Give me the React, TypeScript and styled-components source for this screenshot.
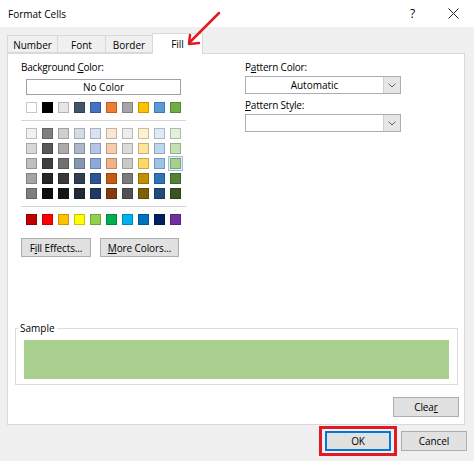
import styled, { createGlobalStyle } from 'styled-components';

const GlobalStyle = createGlobalStyle`
  html, body {
    margin: 0;
    padding: 0;
    background: #f0f0f0;
  }
  body {
    font-family: 'Open Sans', 'Noto Sans', sans-serif;
    font-size: 10px;
    color: #000;
  }
`;

const THEME_ROWS: string[][] = [
  ['#ffffff', '#000000', '#e7e6e6', '#44546a', '#4472c4', '#ed7d31', '#a5a5a5', '#ffc000', '#5b9bd5', '#70ad47'],
];

const SHADE_ROWS: string[][] = [
  ['#f2f2f2', '#7f7f7f', '#d0cece', '#d6dce4', '#d9e2f3', '#fbe5d5', '#ededed', '#fff2cc', '#deebf6', '#e2efd9'],
  ['#d8d8d8', '#595959', '#aeaaaa', '#adb9ca', '#b4c6e7', '#f7cbac', '#dbdbdb', '#fee599', '#bdd7ee', '#c5e0b3'],
  ['#bfbfbf', '#3f3f3f', '#757070', '#8496b0', '#8eaadb', '#f4b183', '#c9c9c9', '#ffd965', '#9dc3e6', '#a8d08d'],
  ['#a5a5a5', '#262626', '#3a3838', '#323f4f', '#2f5496', '#c55a11', '#7b7b7b', '#bf9000', '#2e75b5', '#538135'],
  ['#7f7f7f', '#0c0c0c', '#171616', '#222a35', '#1f3864', '#833c0b', '#525252', '#7f6000', '#1e4e79', '#375623'],
];

const STANDARD_ROWS: string[][] = [
  ['#c00000', '#ff0000', '#ffc000', '#ffff00', '#92d050', '#00b050', '#00b0f0', '#0070c0', '#002060', '#7030a0'],
];

const SELECTED = '#a8d08d';

const TABS = [
  { name: 'Number', width: 51 },
  { name: 'Font', width: 49 },
  { name: 'Border', width: 48 },
  { name: 'Fill', width: 51 },
];

const Dialog = styled.div`
  position: relative;
  width: 474px;
  height: 461px;
  display: flex;
  flex-direction: column;
  background: #f0f0f0;
  overflow: hidden;
`;

const TitleBar = styled.div`
  height: 27px;
  flex-shrink: 0;
  display: flex;
  align-items: center;
  padding-left: 8px;
  background: #ffffff;
`;

const Title = styled.div`
  flex-grow: 1;
  font-size: 10px;
`;

const TitleButton = styled.div`
  width: 41px;
  height: 27px;
  display: flex;
  align-items: center;
  justify-content: center;
  font-size: 12px;
`;

const Body = styled.div`
  display: flex;
  flex-direction: column;
  padding: 6px 9px 0 7px;
`;

const TabStrip = styled.div`
  height: 20px;
  display: flex;
  align-items: flex-end;
  padding-left: 1px;
`;

const Tab = styled.div<{ $active: boolean; $width: number }>`
  width: ${(p) => p.$width}px;
  height: ${(p) => (p.$active ? 21 : 18)}px;
  box-sizing: border-box;
  display: flex;
  align-items: center;
  justify-content: center;
  padding-top: ${(p) => (p.$active ? 0 : 1)}px;
  background: ${(p) => (p.$active ? '#ffffff' : '#f0f0f0')};
  border: 1px solid #d9d9d9;
  border-bottom: ${(p) => (p.$active ? 'none' : '1px solid #d9d9d9')};
  margin-left: -1px;
  margin-bottom: ${(p) => (p.$active ? -1 : 0)}px;
  position: relative;
  z-index: ${(p) => (p.$active ? 1 : 0)};
  font-size: 10px;
`;

const Panel = styled.div`
  height: 372px;
  box-sizing: border-box;
  display: flex;
  flex-direction: column;
  background: #ffffff;
  border: 1px solid #d9d9d9;
  padding: 6px 5px 7px 7px;
`;

const TopSection = styled.div`
  display: flex;
`;

const LeftColumn = styled.div`
  width: 165px;
  margin-left: 6px;
  margin-right: 59px;
  display: flex;
  flex-direction: column;
`;

const RightColumn = styled.div`
  width: 156px;
  display: flex;
  flex-direction: column;
`;

const Label = styled.div<{ $gap?: number }>`
  height: 14px;
  line-height: 14px;
  margin-top: ${(p) => p.$gap ?? 0}px;
  letter-spacing: -0.2px;
  white-space: nowrap;
`;

const NoColorBox = styled.div`
  width: 155px;
  height: 16px;
  box-sizing: border-box;
  margin: 5px 0 0 5px;
  border: 1px solid #a0a0a0;
  display: flex;
  align-items: center;
  justify-content: center;
  font-size: 10px;
`;

const SwatchGrid = styled.div`
  display: grid;
  grid-template-columns: repeat(10, 11px);
  column-gap: 5px;
  row-gap: 4px;
  margin: 7px 0 0 5px;
`;

const Swatch = styled.div<{ $selected?: boolean }>`
  width: 11px;
  height: 11px;
  box-sizing: border-box;
  border: 1px solid rgba(0, 0, 0, 0.22);
  outline: ${(p) => (p.$selected ? '1px solid #99c2ee' : 'none')};
  outline-offset: 1px;
  box-shadow: ${(p) => (p.$selected ? '0 0 0 2px #e4effb' : 'none')};
`;

const Separator = styled.div`
  height: 1px;
  margin-top: 7px;
  background: #d4d4d4;
`;

const ButtonRow = styled.div`
  display: flex;
  gap: 9px;
  margin-top: 13px;
`;

const Button = styled.div<{ $width: number; $height?: number; $primary?: boolean }>`
  width: ${(p) => p.$width}px;
  height: ${(p) => p.$height ?? 19}px;
  box-sizing: border-box;
  display: flex;
  align-items: center;
  justify-content: center;
  background: #e1e1e1;
  border: ${(p) => (p.$primary ? '2px solid #0078d7' : '1px solid #adadad')};
  font-size: 10px;
  letter-spacing: -0.1px;
`;

const Combo = styled.div`
  height: 18px;
  box-sizing: border-box;
  margin-top: 2px;
  display: flex;
  border: 1px solid #abadb3;
  background: #ffffff;
`;

const ComboValue = styled.div`
  flex-grow: 1;
  display: flex;
  align-items: center;
  justify-content: center;
  font-size: 10px;
`;

const ComboArrow = styled.div`
  width: 16px;
  display: flex;
  align-items: center;
  justify-content: center;
  background: #e6e6e6;
  border-left: 1px solid #cfcfcf;
`;

const SampleBox = styled.fieldset`
  margin: auto 1px 0 0;
  padding: 5px 8px 5px 8px;
  border: 1px solid #dcdcdc;
  min-width: 0;
`;

const SampleLegend = styled.legend`
  margin-left: -6px;
  padding: 0 2px;
  height: 14px;
  line-height: 14px;
  font-size: 10px;
`;

const SampleFill = styled.div<{ $color: string }>`
  height: 39px;
  background: ${(p) => p.$color};
`;

const ClearRow = styled.div`
  display: flex;
  justify-content: flex-end;
  margin-top: 12px;
`;

const Footer = styled.div`
  flex-grow: 1;
  display: flex;
  justify-content: flex-end;
  align-items: center;
  gap: 4px;
  padding: 0 7px 4px 0;
`;

const Highlight = styled.div`
  border: 3px solid #e01b24;
  padding: 2px 3px;
`;

const Annotation = styled.svg`
  position: absolute;
  left: 0;
  top: 0;
  z-index: 5;
  pointer-events: none;
`;

const Chevron = () => (
  <svg width="8" height="5" viewBox="0 0 8 5">
    <path d="M0.5 0.5 L4 4 L7.5 0.5" fill="none" stroke="#606060" strokeWidth="1" />
  </svg>
);

const Palette = ({ rows }: { rows: string[][] }) => (
  <SwatchGrid>
    {rows.flat().map((c, i) => (
      <Swatch key={i} style={{ background: c }} $selected={rows === SHADE_ROWS && c === SELECTED} />
    ))}
  </SwatchGrid>
);

const App = () => {
  return (
    <>
      <GlobalStyle />
      <Dialog>
        <TitleBar>
          <Title>Format Cells</Title>
          <TitleButton>?</TitleButton>
          <TitleButton>
            <svg width="11" height="11" viewBox="0 0 11 11">
              <path d="M0.5 0.5 L10.5 10.5 M10.5 0.5 L0.5 10.5" stroke="#222" strokeWidth="1" />
            </svg>
          </TitleButton>
        </TitleBar>
        <Body>
          <TabStrip>
            {TABS.map((t) => (
              <Tab key={t.name} $active={t.name === 'Fill'} $width={t.width}>
                {t.name}
              </Tab>
            ))}
          </TabStrip>
          <Panel>
            <TopSection>
              <LeftColumn>
                <Label>
                  Background <u>C</u>olor:
                </Label>
                <NoColorBox>No Color</NoColorBox>
                <Palette rows={THEME_ROWS} />
                <Separator />
                <Palette rows={SHADE_ROWS} />
                <Separator />
                <Palette rows={STANDARD_ROWS} />
                <ButtonRow>
                  <Button $width={70}>
                    F<u>i</u>ll Effects...
                  </Button>
                  <Button $width={79}>
                    <u>M</u>ore Colors...
                  </Button>
                </ButtonRow>
              </LeftColumn>
              <RightColumn>
                <Label>
                  P<u>a</u>ttern Color:
                </Label>
                <Combo>
                  <ComboValue>Automatic</ComboValue>
                  <ComboArrow>
                    <Chevron />
                  </ComboArrow>
                </Combo>
                <Label $gap={4}>
                  <u>P</u>attern Style:
                </Label>
                <Combo>
                  <ComboValue />
                  <ComboArrow>
                    <Chevron />
                  </ComboArrow>
                </Combo>
              </RightColumn>
            </TopSection>
            <SampleBox>
              <SampleLegend>Sample</SampleLegend>
              <SampleFill $color="#a9d08e" />
            </SampleBox>
            <ClearRow>
              <Button $width={66} $height={20}>
                Clea<u>r</u>
              </Button>
            </ClearRow>
          </Panel>
        </Body>
        <Footer>
          <Highlight>
            <Button $width={66} $height={20} $primary>
              OK
            </Button>
          </Highlight>
          <Button $width={66} $height={20}>
            Cancel
          </Button>
        </Footer>
        <Annotation width="474" height="461" viewBox="0 0 474 461">
          <path d="M219 13 L190 42" stroke="#e01b24" strokeWidth="2.5" strokeLinecap="round" fill="none" />
          <path d="M190 35 L189 44 L199 43" stroke="#e01b24" strokeWidth="2.5" strokeLinecap="round" strokeLinejoin="round" fill="none" />
        </Annotation>
      </Dialog>
    </>
  );
};

export default App;
